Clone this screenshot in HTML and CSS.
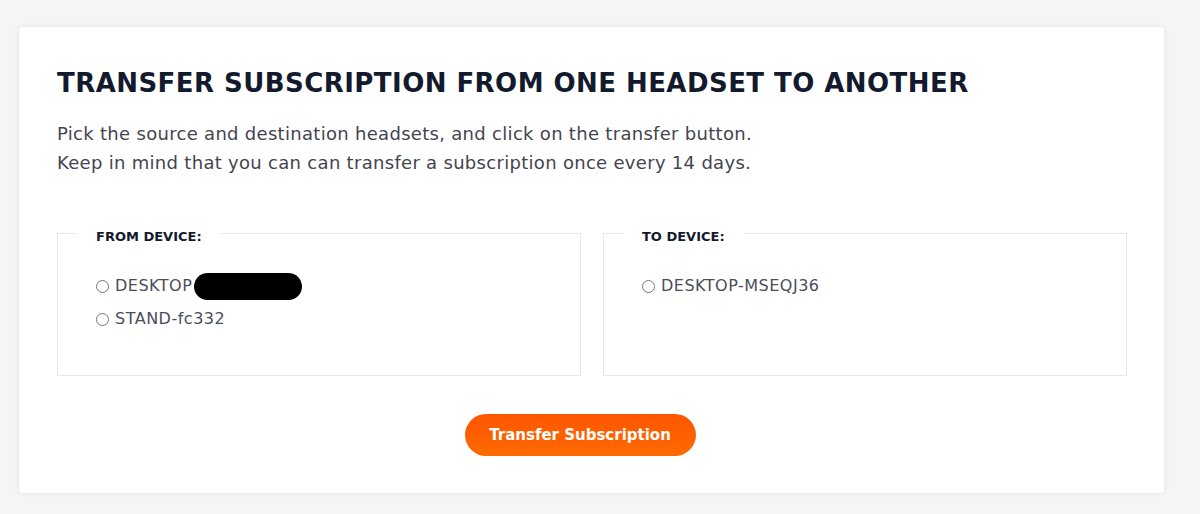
FILE: index.html
```html
<!DOCTYPE html>
<html>
<head>
<meta charset="utf-8">
<link rel="stylesheet" href="styles.css">
</head>
<body>
<div class="card">
  <h1 class="title">TRANSFER SUBSCRIPTION FROM ONE HEADSET TO ANOTHER</h1>
  <p class="intro">Pick the source and destination headsets, and click on the transfer button.<br>Keep in mind that you can can transfer a subscription once every 14 days.</p>
  <div class="devices">
    <fieldset class="box">
      <legend class="legend">FROM DEVICE:</legend>
      <label class="option"><input type="radio" name="from" class="radio"><span>DESKTOP</span><span class="redact"></span></label>
      <label class="option"><input type="radio" name="from" class="radio"><span>STAND-fc332</span></label>
    </fieldset>
    <fieldset class="box">
      <legend class="legend">TO DEVICE:</legend>
      <label class="option"><input type="radio" name="to" class="radio"><span>DESKTOP-MSEQJ36</span></label>
    </fieldset>
  </div>
  <div class="actions">
    <button class="btn">Transfer Subscription</button>
  </div>
</div>
</body>
</html>
```
FILE: styles.css
```css
* { box-sizing: border-box; }
html, body { margin: 0; padding: 0; }
body {
  background: #f5f5f5;
  font-family: "DejaVu Sans", sans-serif;
  height: 514px;
  padding-top: 27px;
  padding-left: 19px;
}
.card {
  width: 1145px;
  height: 466px;
  background: #fff;
  border-radius: 4px;
  box-shadow: 0 0 6px rgba(0,0,0,0.08);
  padding: 0 37px 0 38px;
  display: flex;
  flex-direction: column;
}
.title {
  margin: 40px 0 0 0;
  font-size: 26px;
  line-height: 32px;
  font-weight: 700;
  color: #131a2e;
  letter-spacing: 0.45px;
}
.intro {
  margin: 20px 0 0 0;
  font-size: 18px;
  line-height: 29px;
  letter-spacing: 0.3px;
  color: #44444f;
}
.devices {
  display: grid;
  grid-template-columns: 1fr 1fr;
  column-gap: 22px;
  margin-top: 49px;
}
.box {
  margin: 0;
  border: 1px solid #e8e8e8;
  height: 150px;
  padding: 37px 20px 0 38px;
  display: flex;
  flex-direction: column;
  gap: 15px;
  min-width: 0;
}
.legend {
  margin-left: -19px;
  padding: 0 19px;
  font-size: 13px;
  font-weight: 700;
  color: #131a2e;
  line-height: 14px;
  position: relative;
  top: 4px;
}
.option {
  display: flex;
  align-items: center;
  font-size: 16px;
  line-height: 18px;
  letter-spacing: 0.5px;
  color: #4a4d5c;
  height: 18px;
}
.radio {
  margin: 0 6px 0 0;
  width: 13px;
  height: 13px;
}
.redact {
  display: inline-block;
  width: 108px;
  height: 27px;
  background: #000;
  border-radius: 14px;
  margin-left: 2px;
}
.actions {
  display: flex;
  justify-content: center;
  margin-top: 38px;
  padding-right: 24px;
}
.btn {
  width: 231px;
  height: 42px;
  border: none;
  border-radius: 21px;
  background: linear-gradient(180deg, #ff5500, #ff6a00);
  color: #fff;
  font-family: "DejaVu Sans", sans-serif;
  font-weight: 700;
  font-size: 15px;
  padding: 0;
}
```
